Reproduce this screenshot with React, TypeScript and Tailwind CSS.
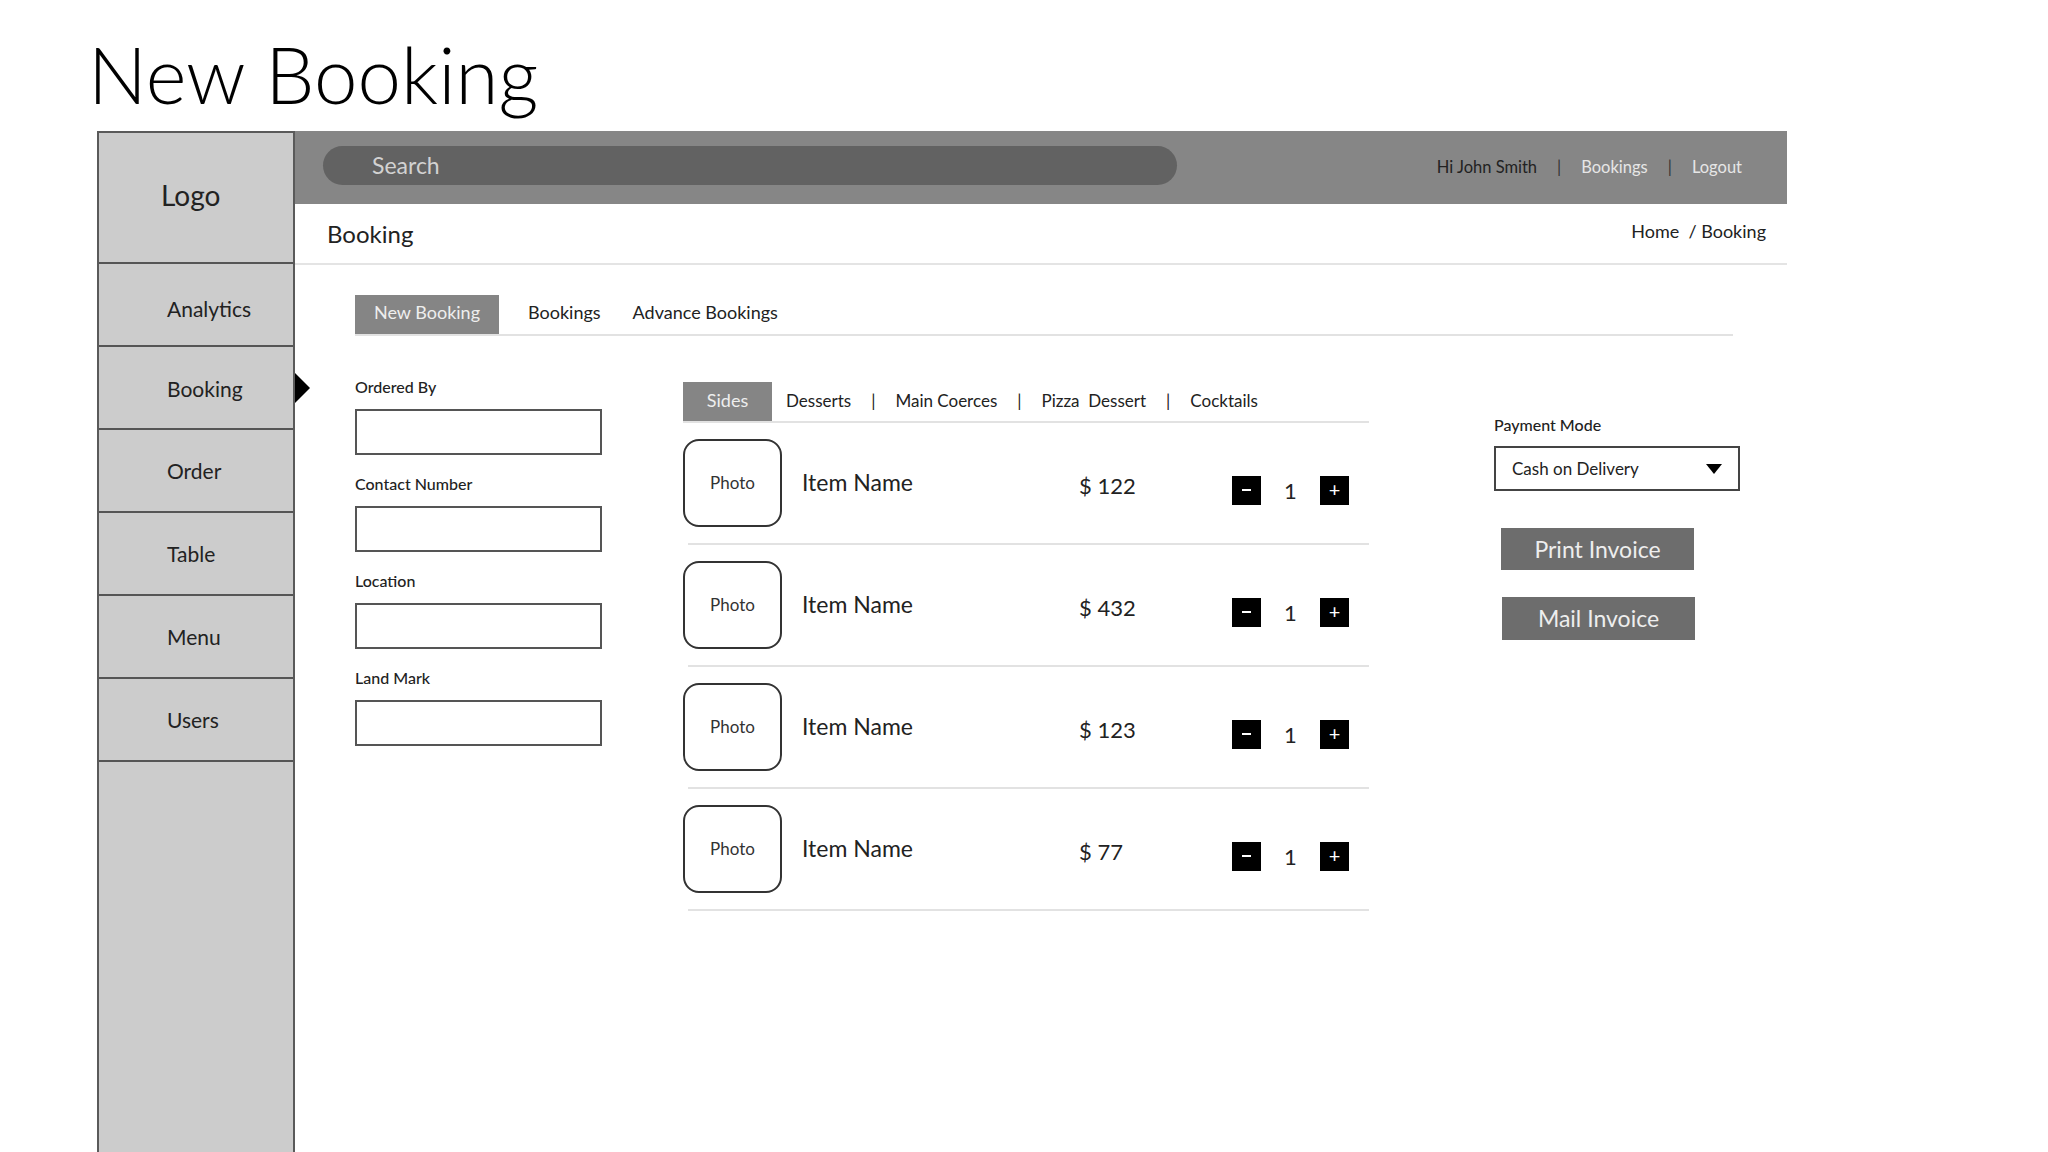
import React from "react";

const navItems = ["Analytics", "Booking", "Order", "Table", "Menu", "Users"];
const rows = ["$ 122", "$ 432", "$ 123", "$ 77"];

function Field({ label }: { label: string }) {
  return (
    <div className="flex flex-col">
      <div className="text-[16px] leading-[20px] font-medium text-[#222] h-[20px]">{label}</div>
      <div className="mt-[12px] w-[247px] h-[46px] border-2 border-[#555] bg-white" />
      <div className="h-[19px]" />
    </div>
  );
}

export default function App() {
  return (
    <div className="w-[2048px] h-[1152px] bg-white overflow-hidden flex flex-col font-['Lato','Open_Sans',sans-serif] text-[#222]">
      <div className="h-[131px] shrink-0 pl-[88px] pt-[35px] text-[78px] leading-none font-light text-black">
        New Booking
      </div>
      <div className="flex flex-1 min-h-0">
        {/* Sidebar */}
        <div className="ml-[97px] w-[198px] shrink-0 bg-[#cccccc] border-l-2 border-r-2 border-t-2 border-[#5a5a5a] flex flex-col">
          <div className="h-[131px] border-b-2 border-[#555] flex items-center pl-[62px] pb-[6px] text-[28px] text-[#222]">
            Logo
          </div>
          {navItems.map((n, i) => (
            <div
              key={n}
              className={
                "relative h-[83px] border-b-2 border-[#555] flex items-center pl-[68px] text-[21px] text-[#222] " +
                (i === 0 ? "pt-[8px]" : i === 1 ? "pt-[3px]" : "")
              }
            >
              {n}
              {n === "Booking" && (
                <svg className="absolute right-[-17px] top-[26px]" width="15" height="30" viewBox="0 0 15 30">
                  <polygon points="0,0 15,15 0,30" fill="#000" />
                </svg>
              )}
            </div>
          ))}
        </div>

        {/* Main */}
        <div className="w-[1492px] shrink-0 flex flex-col">
          <div className="h-[73px] bg-[#868686] flex items-start justify-between">
            <div className="mt-[15px] ml-[28px] w-[854px] h-[39px] rounded-full bg-[#626262] flex items-center pl-[49px] text-[23px] text-[#d2d2d2]">
              Search
            </div>
            <div className="h-[73px] flex items-center gap-[20px] pr-[45px] text-[16.5px]">
              <span className="text-[#222]">Hi John Smith</span>
              <span className="text-[#333]">|</span>
              <span className="text-[#e6e6e6]">Bookings</span>
              <span className="text-[#333]">|</span>
              <span className="text-[#e6e6e6]">Logout</span>
            </div>
          </div>
          <div className="h-[61px] border-b-2 border-[#e4e4e4] flex items-center justify-between pl-[32px] pr-[21px]">
            <span className="text-[24px] text-[#222]">Booking</span>
            <span className="text-[18px] text-[#222] pb-[5px]">Home&nbsp; / Booking</span>
          </div>

          <div className="pl-[60px] pr-[54px] pt-[30px]">
            {/* Tabs */}
            <div className="flex border-b-2 border-[#e2e2e2] h-[41px] items-start">
              <div className="w-[144px] h-[39px] bg-[#858585] text-[#eeeeee] text-[18px] flex items-center justify-center pb-[4px]">
                New Booking
              </div>
              <div className="ml-[29px] h-[39px] flex items-center pb-[4px] text-[18px]">Bookings</div>
              <div className="ml-[32px] h-[39px] flex items-center pb-[4px] text-[18px]">Advance Bookings</div>
            </div>

            {/* Columns */}
            <div className="flex items-start mt-[41px]">
              <div className="w-[247px] shrink-0 flex flex-col">
                <Field label="Ordered By" />
                <Field label="Contact Number" />
                <Field label="Location" />
                <Field label="Land Mark" />
              </div>

              <div className="ml-[81px] w-[686px] shrink-0 mt-[5px] flex flex-col">
                <div className="flex h-[41px] border-b-2 border-[#e2e2e2] items-start text-[17px]">
                  <div className="w-[89px] h-[39px] bg-[#858585] text-[#eeeeee] text-[18px] flex items-center justify-center pb-[2px]">
                    Sides
                  </div>
                  <div className="ml-[14px] h-[39px] flex items-center gap-[20px] pb-[2px]">
                    <span>Desserts</span>
                    <span>|</span>
                    <span>Main Coerces</span>
                    <span>|</span>
                    <span className="whitespace-pre">Pizza  Dessert</span>
                    <span>|</span>
                    <span>Cocktails</span>
                  </div>
                </div>
                {rows.map((p, i) => (
                  <div key={i} className="flex flex-col">
                    <div className="flex items-center pt-[16px] pb-[16px]">
                      <div className="w-[99px] h-[88px] shrink-0 border-2 border-[#333] rounded-[16px] flex items-center justify-center text-[17px] text-[#333]">
                        Photo
                      </div>
                      <div className="ml-[20px] w-[277px] shrink-0 text-[23px] text-[#222] pb-[2px]">Item Name</div>
                      <div className="w-[153px] shrink-0 text-[22px] text-[#222] mt-[4px]">{p}</div>
                      <div className="flex items-center mt-[14px]">
                        <div className="w-[29px] h-[29px] bg-black flex items-center justify-center">
                          <div className="w-[9px] h-[2px] bg-white" />
                        </div>
                        <div className="w-[59px] text-center text-[22px] text-[#222]">1</div>
                        <div className="w-[29px] h-[29px] bg-black flex items-center justify-center text-white text-[20px] leading-none pb-[2px]">
                          +
                        </div>
                      </div>
                    </div>
                    <div className="ml-[5px] h-[2px] bg-[#e2e2e2]" />
                  </div>
                ))}
              </div>

              <div className="ml-[125px] shrink-0 mt-[38px] flex flex-col">
                <div className="text-[16px] leading-[20px] font-medium text-[#222]">Payment Mode</div>
                <div className="mt-[11px] w-[246px] h-[45px] border-2 border-[#444] flex items-center justify-between pl-[16px] pr-[16px]">
                  <span className="text-[17px] text-[#222]">Cash on Delivery</span>
                  <svg width="16" height="10" viewBox="0 0 16 10">
                    <polygon points="0,0 16,0 8,10" fill="#000" />
                  </svg>
                </div>
                <div className="mt-[37px] ml-[7px] w-[193px] h-[42px] bg-[#6d6d6d] text-[#eeeeee] text-[23px] flex items-center justify-center">
                  Print Invoice
                </div>
                <div className="mt-[27px] ml-[8px] w-[193px] h-[43px] bg-[#6d6d6d] text-[#eeeeee] text-[23px] flex items-center justify-center">
                  Mail Invoice
                </div>
              </div>
            </div>
          </div>
        </div>
      </div>
    </div>
  );
}
